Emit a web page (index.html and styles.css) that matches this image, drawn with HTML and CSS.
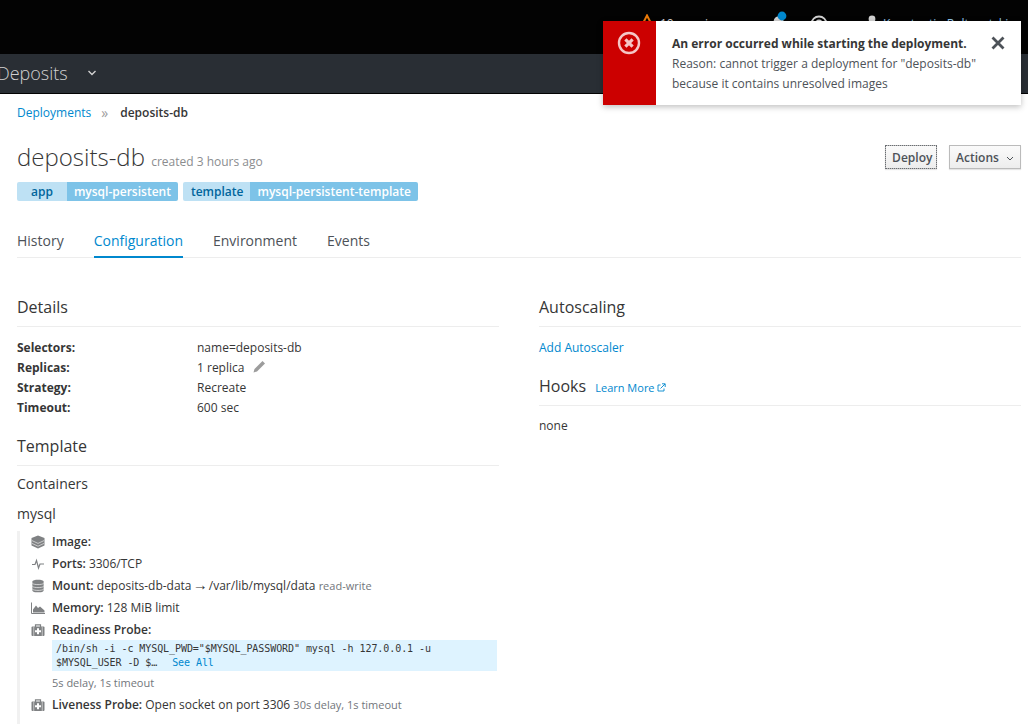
FILE: index.html
```html
<!DOCTYPE html>
<html lang="en">
<head>
    <meta charset="UTF-8">
    <title>deposits-db</title>
    <link rel="stylesheet" href="styles.css">
</head>
<body>
    <!-- Top bars -->
    <header class="top-bar">
        <div class="top-item top-warnings">
            <svg class="icon-warning" width="14" height="14" viewBox="0 0 14 14"><path d="M7 1.5 L13 13 H1 Z" fill="none" stroke="#ec7a08" stroke-width="2"/></svg>
            <span>10 warnings</span>
        </div>
        <div class="top-item top-bell">
            <svg width="18" height="20" viewBox="0 0 18 20"><path d="M2 16 C4 13 3 9 5 7 C7 5 11 5 13 8 C14 11 14 14 16 16 Z" fill="#d1d1d1"/><circle cx="12" cy="5" r="4.4" fill="#0088ce"/></svg>
        </div>
        <div class="top-item top-help">
            <svg width="18" height="18" viewBox="0 0 18 18"><circle cx="9" cy="9" r="7.5" fill="none" stroke="#d1d1d1" stroke-width="1.8"/><circle cx="9" cy="9" r="3.5" fill="none" stroke="#d1d1d1" stroke-width="1.8"/></svg>
        </div>
        <div class="top-item top-user">
            <svg width="10" height="16" viewBox="0 0 10 16"><circle cx="5" cy="4" r="3.4" fill="#d1d1d1"/><path d="M1 16 V10 C1 8 9 8 9 10 V16 Z" fill="#d1d1d1"/></svg>
            <span>Konstantin Rultuyatskiy</span>
        </div>
    </header>
    <nav class="project-bar">
        <span class="project-name">Deposits</span>
        <svg class="project-caret" width="10" height="6" viewBox="0 0 10 6"><path d="M1.5 1 L5 4.5 L8.5 1" fill="none" stroke="#d1d1d1" stroke-width="1.4"/></svg>
    </nav>

    <!-- Toast -->
    <div class="toast">
        <div class="toast-icon">
            <svg width="24" height="24" viewBox="0 0 24 24"><circle cx="12" cy="12" r="10" fill="none" stroke="#f5c6c6" stroke-width="2.4"/><path d="M8.4 8.4 L15.6 15.6 M15.6 8.4 L8.4 15.6" stroke="#f5c6c6" stroke-width="3.2"/></svg>
        </div>
        <div class="toast-body">
            <strong>An error occurred while starting the deployment.</strong>
            <p>Reason: cannot trigger a deployment for "deposits-db" because it contains unresolved images</p>
        </div>
        <svg class="toast-close" width="14" height="14" viewBox="0 0 14 14"><path d="M1.5 1.5 L12.5 12.5 M12.5 1.5 L1.5 12.5" stroke="#4d5258" stroke-width="2.8"/></svg>
    </div>

    <main class="content">
        <ol class="breadcrumb">
            <li><a href="#">Deployments</a></li>
            <li class="crumb-sep">»</li>
            <li class="crumb-active">deposits-db</li>
        </ol>

        <div class="title-row">
            <h1>deposits-db <small>created 3 hours ago</small></h1>
            <div class="title-actions">
                <button class="btn btn-focus">Deploy</button>
                <button class="btn btn-actions">Actions
                    <svg width="8" height="5" viewBox="0 0 8 5"><path d="M1 1 L4 4 L7 1" fill="none" stroke="#4d5258" stroke-width="1"/></svg>
                </button>
            </div>
        </div>

        <div class="labels">
            <span class="label"><span class="label-key">app</span><span class="label-val">mysql-persistent</span></span>
            <span class="label"><span class="label-key">template</span><span class="label-val">mysql-persistent-template</span></span>
        </div>

        <ul class="tabs">
            <li>History</li>
            <li class="active">Configuration</li>
            <li>Environment</li>
            <li>Events</li>
        </ul>

        <div class="columns">
            <section>
                <h3 class="section-head">Details</h3>
                <dl class="details">
                    <dt>Selectors:</dt><dd>name=deposits-db</dd>
                    <dt>Replicas:</dt>
                    <dd>1 replica
                        <svg class="edit-icon" width="13" height="13" viewBox="0 0 13 13"><path d="M0.5 12.5 L1.5 9 L9.5 1 L12 3.5 L4 11.5 Z" fill="#9c9c9c"/></svg>
                    </dd>
                    <dt>Strategy:</dt><dd>Recreate</dd>
                    <dt>Timeout:</dt><dd>600 sec</dd>
                </dl>

                <h3 class="section-head section-template">Template</h3>
                <h4 class="sub-head">Containers</h4>
                <div class="container-name">mysql</div>
                <div class="container-box">
                    <div class="row">
                        <svg class="row-icon" viewBox="0 0 14 14"><path d="M7 0.5 L13.5 3 V10.5 L7 13.5 L0.5 10.5 V3 Z" fill="#7f8183"/><path d="M1 5.6 L7 8.4 L13 5.6 M1 8.4 L7 11.2 L13 8.4" fill="none" stroke="#dcdcdc" stroke-width="0.8"/></svg>
                        <span><b>Image:</b></span>
                    </div>
                    <div class="row">
                        <svg class="row-icon" viewBox="0 0 14 14"><path d="M1 7.5 H4 L5.5 3.5 L7.5 11 L9 7 H13" fill="none" stroke="#7f8183" stroke-width="1.2"/></svg>
                        <span><b>Ports:</b> 3306/TCP</span>
                    </div>
                    <div class="row">
                        <svg class="row-icon" viewBox="0 0 14 14"><path d="M1.4 2.6 C1.4 0 12.6 0 12.6 2.6 V11.4 C12.6 14 1.4 14 1.4 11.4 Z" fill="#7f8183"/><path d="M1.4 4.4 C3 6 11 6 12.6 4.4 M1.4 7.4 C3 9 11 9 12.6 7.4 M1.4 10.2 C3 11.8 11 11.8 12.6 10.2" fill="none" stroke="#e4e4e4" stroke-width="0.8"/></svg>
                        <span><b>Mount:</b> deposits-db-data <span class="arrow">→</span> /var/lib/mysql/data <span class="muted">read-write</span></span>
                    </div>
                    <div class="row">
                        <svg class="row-icon" viewBox="0 0 14 14"><path d="M0.5 1.5 V12.5 H14" fill="none" stroke="#7f8183" stroke-width="1"/><path d="M2 11.5 V8.5 L5 4.5 L7 7 L9 5.5 L13.5 9.5 V11.5 Z" fill="#7f8183"/></svg>
                        <span><b>Memory:</b> 128 MiB limit</span>
                    </div>
                    <div class="row">
                        <svg class="row-icon" viewBox="0 0 14 14"><path d="M4.5 4 V1.8 H9.5 V4" fill="none" stroke="#7f8183" stroke-width="1.2"/><rect x="0.5" y="3.5" width="13" height="9.5" rx="1" fill="#7f8183"/><rect x="2.4" y="3.5" width="0.8" height="9.5" fill="#d5d5d5"/><rect x="10.8" y="3.5" width="0.8" height="9.5" fill="#d5d5d5"/><path d="M7 5.2 V11.2 M4 8.2 H10" stroke="#fff" stroke-width="2"/></svg>
                        <span><b>Readiness Probe:</b></span>
                    </div>
                    <div class="probe-code">
                        <div>/bin/sh -i -c MYSQL_PWD="$MYSQL_PASSWORD" mysql -h 127.0.0.1 -u</div>
                        <div class="probe-line"><span>$MYSQL_USER -D $…</span><a href="#">See All</a></div>
                    </div>
                    <div class="probe-note muted">5s delay, 1s timeout</div>
                    <div class="row">
                        <svg class="row-icon" viewBox="0 0 14 14"><path d="M4.5 4 V1.8 H9.5 V4" fill="none" stroke="#7f8183" stroke-width="1.2"/><rect x="0.5" y="3.5" width="13" height="9.5" rx="1" fill="#7f8183"/><rect x="2.4" y="3.5" width="0.8" height="9.5" fill="#d5d5d5"/><rect x="10.8" y="3.5" width="0.8" height="9.5" fill="#d5d5d5"/><path d="M7 5.2 V11.2 M4 8.2 H10" stroke="#fff" stroke-width="2"/></svg>
                        <span><b>Liveness Probe:</b> Open socket on port 3306 <span class="muted">30s delay, 1s timeout</span></span>
                    </div>
                </div>
            </section>

            <section>
                <h3 class="section-head">Autoscaling</h3>
                <a href="#" class="autoscaler-link">Add Autoscaler</a>
                <h3 class="section-head section-hooks">Hooks <a href="#" class="learn-more">Learn More
                    <svg width="9" height="9" viewBox="0 0 9 9"><path d="M7 5.5 V8 H1 V2 H3.5" fill="none" stroke="#0088ce" stroke-width="0.9"/><path d="M3.5 5.5 L8 1 M5 0.8 H8.2 V4" fill="none" stroke="#0088ce" stroke-width="0.9"/></svg>
                </a></h3>
                <p class="hooks-none">none</p>
            </section>
        </div>
    </main>
</body>
</html>
```

FILE: styles.css
```css
/* Reset */
* {
  margin: 0;
  padding: 0;
  box-sizing: border-box;
}

html, body {
  height: 728px;
  overflow: hidden;
}

body {
  font-family: "Open Sans", sans-serif;
  font-size: 12px;
  line-height: 20px;
  color: #363636;
  background: #fff;
  position: relative;
}

a {
  color: #0088ce;
  text-decoration: none;
}

/* Top bars */
.top-bar {
  height: 54px;
  background: #030303;
  color: #d1d1d1;
  display: flex;
  align-items: flex-start;
  padding: 14px 0 0 640px;
}

.top-item {
  display: flex;
  gap: 6px;
  align-items: flex-start;
  font-size: 12px;
  line-height: 14px;
  white-space: nowrap;
}

.top-warnings {
  width: 130px;
}

.top-warnings span {
  padding-top: 3px;
}

.top-bell {
  width: 40px;
  margin-top: -3px;
}

.top-help {
  width: 57px;
  margin-top: 1px;
}

.top-user {
  color: #8fc5e8;
  margin-top: 1px;
}

.top-user span {
  padding-top: 2px;
}

.project-bar {
  height: 40px;
  background: #292e34;
  border-bottom: 1px solid #030303;
  display: flex;
  align-items: center;
  color: #d1d1d1;
}

.project-name {
  font-size: 18px;
  font-weight: 300;
  margin-left: -3px;
  margin-top: -2px;
}

.project-caret {
  margin-left: 19px;
  margin-top: -2px;
}

/* Toast */
.toast {
  position: absolute;
  top: 21px;
  left: 603px;
  width: 418px;
  height: 84px;
  background: #fff;
  display: flex;
  box-shadow: 0 2px 6px rgba(3, 3, 3, 0.25);
}

.toast-icon {
  width: 53px;
  background: #cc0000;
  display: flex;
  justify-content: center;
  padding: 10px 1px 0 0;
}

.toast-body {
  padding: 13px 0 0 16px;
  width: 330px;
  color: #4d5258;
}

.toast-body strong {
  display: block;
  font-weight: 700;
  color: #363636;
}

.toast-close {
  position: absolute;
  top: 15px;
  right: 16px;
}

/* Main */
.content {
  padding: 0 7px 0 17px;
}

.breadcrumb {
  list-style: none;
  display: flex;
  height: 40px;
  padding-top: 9px;
}

.crumb-sep {
  margin: 0 12px 0 10px;
  font-size: 14px;
  color: #9c9c9c;
}

.crumb-active {
  font-weight: 600;
}

.title-row {
  display: flex;
  justify-content: space-between;
  align-items: flex-start;
  height: 48px;
  padding-top: 8px;
}

h1 {
  font-size: 24px;
  font-weight: 300;
  line-height: 30px;
  color: #363636;
}

h1 small {
  font-size: 12px;
  font-weight: 400;
  color: #8b8d8f;
}

.title-actions {
  display: flex;
  gap: 12px;
  margin-top: 3px;
}

.btn {
  height: 24px;
  padding: 0 6px;
  font: 600 12px "Open Sans", sans-serif;
  color: #4d5258;
  background: linear-gradient(#fafafa, #ededed);
  border: 1px solid #bbb;
  box-shadow: 0 1px 1px rgba(3, 3, 3, 0.1);
}

.btn svg {
  margin-left: 3px;
  vertical-align: middle;
}

.btn-actions svg {
  margin-left: 4px;
}

.btn-focus {
  outline: 1px dotted #6a6e73;
  outline-offset: -1px;
  width: 52px;
}

.labels {
  display: flex;
  gap: 5px;
  height: 19px;
}

.label {
  display: flex;
  font-weight: 600;
  font-size: 12px;
  line-height: 19px;
  border-radius: 2px;
  overflow: hidden;
}

.label-key {
  background: #bee1f4;
  color: #00659c;
  padding: 0 7px 0 8px;
}

.label-val {
  background: #7dc3e8;
  color: #fff;
  padding: 0 7px;
}

.label:first-child .label-key {
  padding: 0 14px;
}

.tabs {
  list-style: none;
  display: flex;
  gap: 30px;
  margin-top: 21px;
  height: 36px;
  border-bottom: 1px solid #ededed;
  font-size: 14px;
  line-height: 20px;
  color: #4d5258;
  padding-top: 9px;
}

.tabs li.active {
  color: #0088ce;
  border-bottom: 2px solid #0088ce;
  height: 27px;
}

/* Columns */
.columns {
  display: grid;
  grid-template-columns: 482px 482px;
  gap: 40px;
  margin-top: 38px;
}

.section-head {
  font-size: 16px;
  font-weight: 400;
  line-height: 22px;
  padding-bottom: 8px;
  border-bottom: 1px solid #ededed;
}

.details {
  display: grid;
  grid-template-columns: 180px 1fr;
  margin-top: 11px;
}

.details dt {
  font-weight: 700;
}

.edit-icon {
  margin-left: 5px;
  vertical-align: -1px;
}

.section-template {
  margin-top: 17px;
}

.sub-head {
  font-size: 14px;
  font-weight: 400;
  line-height: 20px;
  margin-top: 8px;
}

.container-name {
  font-size: 14px;
  margin-top: 10px;
}

.container-box {
  border-left: 3px solid #f1f1f1;
  margin-top: 7px;
  padding: 0 2px 8px 11px;
}

.row {
  display: flex;
  align-items: center;
  height: 22px;
  gap: 7px;
}

.row b {
  font-weight: 600;
}

.row-icon {
  width: 14px;
  height: 14px;
  flex: none;
}

.muted {
  color: #72767b;
  font-size: 11px;
}

.arrow {
  font-family: "Liberation Sans", sans-serif;
  font-size: 15px;
  line-height: 1;
  margin: 0 -2px;
}

.probe-code {
  margin: -1px 0 1px 21px;
  background: #def3ff;
  font-family: "DejaVu Sans Mono", monospace;
  font-size: 10px;
  letter-spacing: -0.07px;
  line-height: 14px;
  padding: 2px 30px 1px 4px;
  color: #363636;
}

.probe-line {
  display: flex;
  gap: 15px;
}

.probe-note {
  margin-left: 21px;
  height: 22px;
  line-height: 22px;
}

.autoscaler-link {
  display: block;
  margin-top: 11px;
}

.section-hooks {
  margin-top: 17px;
  padding-bottom: 6px;
}

.learn-more {
  font-size: 11px;
  margin-left: 5px;
}

.hooks-none {
  margin-top: 10px;
}
```
